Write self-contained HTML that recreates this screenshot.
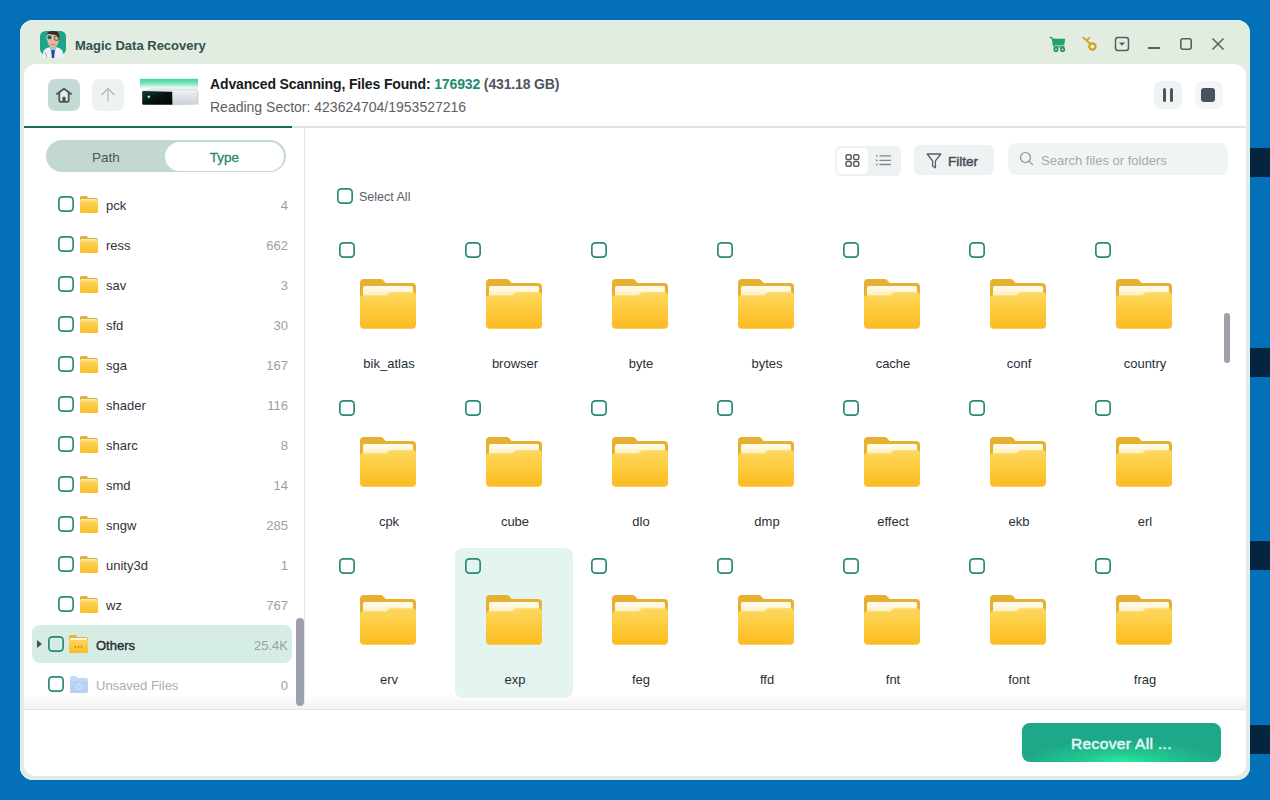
<!DOCTYPE html>
<html><head><meta charset="utf-8">
<style>
*{box-sizing:border-box;margin:0;padding:0}
html,body{width:1270px;height:800px;overflow:hidden}
body{background:#0470b8;font-family:"Liberation Sans",sans-serif;position:relative}
.a{position:absolute}
.stripe{position:absolute;left:1250px;width:20px;background:#04253f}
#win{position:absolute;left:20px;top:20px;width:1230px;height:760px;border-radius:13px;background:#e2ece0;box-shadow:inset 0 0 0 1px #d9f3f6}
#inner{position:absolute;left:24px;top:64px;width:1222px;height:712px;border-radius:12px;background:#fff}
.title{left:75px;top:37.5px;font-size:13px;font-weight:bold;color:#2f514c;white-space:nowrap}
.cb{position:absolute;width:16px;height:16px;box-shadow:inset 0 0 0 1.7px #2b8a76;border-radius:4.5px;background:#fff}
.side-row{position:absolute;left:0;width:292px;height:40px}
.side-row .cb{left:58px;top:11px}
.side-row .nm{position:absolute;left:106px;top:13px;font-size:13px;color:#2e3339;white-space:nowrap}
.side-row .ct{position:absolute;right:4px;top:13px;font-size:13px;color:#9aa0a6;text-align:right}
.side-row svg{position:absolute;left:80px;top:11px}
.cell{position:absolute;width:118px;height:150px}
.cell .cb{left:14px;top:6px}
.cell svg{position:absolute;left:29px;top:42px}
.cell .lb{position:absolute;left:0;width:118px;top:106px;text-align:center;font-size:13px;color:#2a2f36;white-space:nowrap}
</style></head><body>
<div class="stripe" style="top:148px;height:29px"></div>
<div class="stripe" style="top:348px;height:29px"></div>
<div class="stripe" style="top:541px;height:29px"></div>
<div class="stripe" style="top:725px;height:29px"></div>

<div id="win"></div>
<div id="inner"></div>

<!-- title bar -->
<svg class="a" style="left:40px;top:31px" width="26" height="27" viewBox="0 0 26 27">
<rect x="0" y="0" width="26" height="23.5" rx="5.5" fill="#1ca58a"/>
<path d="M2.5 27 L3.5 19.5 Q6 16.5 10 16 L13 18 L16 16 Q20 16.5 22.5 19.5 L23.5 27 Z" fill="#eef1f3"/>
<path d="M9.5 16.3 L13 27 L16.5 16.3 Z" fill="#a9bfdc"/>
<path d="M11.3 19 H14.7 L14.2 27 H11.8Z" fill="#1d4b9e"/>
<path d="M5 21 Q7 24 6.5 26.5" fill="none" stroke="#8a8f90" stroke-width="0.8"/>
<ellipse cx="13" cy="9.5" rx="5.6" ry="7.2" fill="#e8b597"/>
<path d="M6.8 8 Q6 1.5 10 0.3 Q13 -0.5 16.5 0.5 Q20 2 19.3 8 Q18.5 4 13 3.6 Q8 4 6.8 8Z" fill="#3a2a1f"/>
<circle cx="9.5" cy="6.3" r="2.7" fill="#2a5f4c" stroke="#c9ccc4" stroke-width="1.1"/>
<circle cx="16.4" cy="7.3" r="2.2" fill="none" stroke="#5e4436" stroke-width="0.9"/>
<path d="M10.5 13.3 Q13 14.3 15.5 13.3" fill="none" stroke="#b9775c" stroke-width="0.7"/>
</svg>
<div class="a title">Magic Data Recovery</div>

<!-- title icons -->
<svg class="a" style="left:1049px;top:36px" width="18" height="16" viewBox="0 0 18 16">
<defs><linearGradient id="cg" x1="0" y1="0" x2="1" y2="1"><stop offset="0" stop-color="#1e9a58"/><stop offset="1" stop-color="#24ad72"/></linearGradient></defs>
<path d="M1.2 1.4 L3.4 2.2 L4.6 9.6" fill="none" stroke="#23a067" stroke-width="1.5" stroke-linecap="round" stroke-linejoin="round"/>
<path d="M3.8 2.8 H16.2 L15.2 9.6 H4.8Z" fill="url(#cg)"/>
<path d="M4.6 10.9 H15.4" stroke="#1f9a5e" stroke-width="1.2"/>
<circle cx="7" cy="13.4" r="1.7" fill="none" stroke="#1f935a" stroke-width="1.7"/>
<circle cx="13.6" cy="13.4" r="1.7" fill="none" stroke="#1f935a" stroke-width="1.7"/>
</svg>
<svg class="a" style="left:1082px;top:36px" width="16" height="16" viewBox="0 0 16 16">
<path d="M1.3 1.6 L8.3 7.8" stroke="#c9a21e" stroke-width="1.8" stroke-linecap="round"/>
<path d="M4.6 4.4 L7.6 1.7" stroke="#c9a21e" stroke-width="1.7" stroke-linecap="round"/>
<circle cx="10.4" cy="10.5" r="3.1" fill="#f6ecd0" stroke="#c9a21e" stroke-width="2.2"/>
</svg>
<svg class="a" style="left:1114px;top:36px" width="16" height="16" viewBox="0 0 16 16">
<rect x="1.5" y="1.5" width="13" height="13" rx="2.5" fill="none" stroke="#56605e" stroke-width="1.5"/>
<path d="M5 6.6 H11 L8 9.8Z" fill="#56625e"/>
</svg>
<div class="a" style="left:1148px;top:47px;width:12px;height:1.6px;background:#56605e"></div>
<div class="a" style="left:1180px;top:38px;width:12px;height:12px;box-shadow:inset 0 0 0 1.6px #56625e;border-radius:3px"></div>
<svg class="a" style="left:1211px;top:37px" width="14" height="14" viewBox="0 0 14 14">
<path d="M1.5 1.5 L12.5 12.5 M12.5 1.5 L1.5 12.5" stroke="#56625e" stroke-width="1.5"/>
</svg>

<!-- header -->
<div class="a" style="left:48px;top:79px;width:32px;height:32px;border-radius:7px;background:#c4dbd5"></div>
<svg class="a" style="left:55px;top:87px" width="18" height="17" viewBox="0 0 18 17">
<path d="M4.3 7 V13.3 Q4.3 14.9 5.9 14.9 H12.1 Q13.7 14.9 13.7 13.3 V7 L9 3Z" fill="#e7eef0"/>
<path d="M1.9 6.9 L9 1.7 L16.1 6.9" fill="none" stroke="#4a5558" stroke-width="1.8" stroke-linejoin="round" stroke-linecap="round"/>
<path d="M4.3 6 V13.3 Q4.3 14.9 5.9 14.9 H12.1 Q13.7 14.9 13.7 13.3 V6" fill="none" stroke="#4a5558" stroke-width="1.8"/>
<path d="M7.3 14.9 V11.3 Q7.3 9.6 9 9.6 Q10.7 9.6 10.7 11.3 V14.9Z" fill="#4a5558"/>
</svg>
<div class="a" style="left:92px;top:79px;width:32px;height:32px;border-radius:7px;background:#eef3f2"></div>
<svg class="a" style="left:100px;top:87px" width="16" height="16" viewBox="0 0 16 16">
<path d="M8 14.5 V2 M1.5 8 L8 1.5 L14.5 8" fill="none" stroke="#afb4b6" stroke-width="1.15"/>
</svg>

<!-- drive -->
<svg class="a" style="left:140px;top:78px" width="60" height="30" viewBox="0 0 60 30">
<defs>
<linearGradient id="gg" x1="0" y1="0" x2="0" y2="1"><stop offset="0" stop-color="#3cd59a"/><stop offset="0.45" stop-color="#7fe3bb"/><stop offset="1" stop-color="#ffffff"/></linearGradient>
<linearGradient id="dk" x1="0" y1="0" x2="1" y2="1"><stop offset="0" stop-color="#0f3d32"/><stop offset="0.5" stop-color="#061310"/><stop offset="1" stop-color="#030303"/></linearGradient>
<linearGradient id="sv" x1="0" y1="0" x2="0" y2="1"><stop offset="0" stop-color="#eceef2"/><stop offset="1" stop-color="#cbd0d8"/></linearGradient>
</defs>
<rect x="0" y="0.8" width="58" height="10" fill="url(#gg)"/>
<path d="M12 10.3 L57 10.6 L58 13 L3 13Z" fill="#e2e5e9"/>
<path d="M3.5 13 L32.5 13.7 V26.8 L3.5 26.8 Q2.2 26.8 2.2 25.5 V14.3 Q2.2 13 3.5 13Z" fill="url(#dk)"/>
<path d="M32.3 13.6 L57.8 13.2 V26.6 L33 27.2 Z" fill="url(#sv)"/>
<path d="M57.8 13.2 V26.6" stroke="#b9bec8" stroke-width="0.8"/>
<path d="M8.8 17.2 L10.4 18.8 L8.8 20.4 L7.2 18.8Z" fill="#8ff5c8"/>
</svg>

<div class="a" style="left:210px;top:76px;font-size:14px;font-weight:bold;color:#161a1d;white-space:nowrap;letter-spacing:-0.14px">Advanced Scanning, Files Found: <span style="color:#1f8a70">176932</span> <span style="color:#50555c">(431.18 GB)</span></div>
<div class="a" style="left:210px;top:99px;font-size:14px;color:#5b6067;white-space:nowrap">Reading Sector: 423624704/1953527216</div>

<div class="a" style="left:1154px;top:81px;width:28px;height:28px;border-radius:7px;background:#f0f3f4"></div>
<div class="a" style="left:1163px;top:88px;width:3px;height:14px;border-radius:1.5px;background:#4e5260"></div>
<div class="a" style="left:1170px;top:88px;width:3px;height:14px;border-radius:1.5px;background:#4e5260"></div>
<div class="a" style="left:1195px;top:81px;width:28px;height:28px;border-radius:7px;background:#f4f6f6"></div>
<div class="a" style="left:1201px;top:88px;width:14px;height:14px;border-radius:3px;background:#4b5161"></div>

<div class="a" style="left:24px;top:126px;width:1222px;height:2px;background:#e2e3e5"></div>
<div class="a" style="left:24px;top:126px;width:268px;height:2px;background:#1b6e5a"></div>
<div class="a" style="left:304px;top:128px;width:1px;height:582px;background:#e8e8e8"></div>

<!-- sidebar -->
<div class="a" style="left:46px;top:140px;width:240px;height:32px;border-radius:16px;background:#c3d8d1"></div>
<div class="a" style="left:165px;top:141.5px;width:119px;height:29px;border-radius:15px;background:#fff"></div>
<div class="a" style="left:46px;top:150px;width:120px;text-align:center;font-size:13.5px;color:#4b5559">Path</div>
<div class="a" style="left:165px;top:150px;width:119px;text-align:center;font-size:13.5px;color:#2b8a73;-webkit-text-stroke:0.35px #2b8a73">Type</div>

<svg width="0" height="0" style="position:absolute"><defs>
<linearGradient id="fr" x1="0" y1="0" x2="0" y2="1"><stop offset="0" stop-color="#fdd862"/><stop offset="0.5" stop-color="#fdca3c"/><stop offset="1" stop-color="#fbbb22"/></linearGradient>
<linearGradient id="pp" x1="0" y1="0" x2="0" y2="1"><stop offset="0" stop-color="#fffdf2"/><stop offset="1" stop-color="#fde9a8"/></linearGradient>
<linearGradient id="sfr" x1="0" y1="0" x2="0" y2="1"><stop offset="0" stop-color="#fdd660"/><stop offset="1" stop-color="#fbbd26"/></linearGradient>
</defs></svg><div class="side-row" style="top:185px"><div class="cb"></div><svg width="18" height="17" viewBox="0 0 18 17"><path d="M0 1.5 Q0 0 1.5 0 H6 Q6.8 0 7.3 0.7 L8.2 2 H16.5 Q18 2 18 3.5 V10 H0Z" fill="#dcaf38"/><path d="M0.8 3 H17.2 V6 H0.8Z" fill="#fde9a6"/><path d="M0 4.2 H18 V15.8 Q18 17 16.8 17 H1.2 Q0 17 0 15.8Z" fill="url(#sfr)"/><path d="M0.5 4.7 H17.5" stroke="#fee58e" stroke-width="0.8"/></svg><div class="nm">pck</div><div class="ct">4</div></div>
<div class="side-row" style="top:225px"><div class="cb"></div><svg width="18" height="17" viewBox="0 0 18 17"><path d="M0 1.5 Q0 0 1.5 0 H6 Q6.8 0 7.3 0.7 L8.2 2 H16.5 Q18 2 18 3.5 V10 H0Z" fill="#dcaf38"/><path d="M0.8 3 H17.2 V6 H0.8Z" fill="#fde9a6"/><path d="M0 4.2 H18 V15.8 Q18 17 16.8 17 H1.2 Q0 17 0 15.8Z" fill="url(#sfr)"/><path d="M0.5 4.7 H17.5" stroke="#fee58e" stroke-width="0.8"/></svg><div class="nm">ress</div><div class="ct">662</div></div>
<div class="side-row" style="top:265px"><div class="cb"></div><svg width="18" height="17" viewBox="0 0 18 17"><path d="M0 1.5 Q0 0 1.5 0 H6 Q6.8 0 7.3 0.7 L8.2 2 H16.5 Q18 2 18 3.5 V10 H0Z" fill="#dcaf38"/><path d="M0.8 3 H17.2 V6 H0.8Z" fill="#fde9a6"/><path d="M0 4.2 H18 V15.8 Q18 17 16.8 17 H1.2 Q0 17 0 15.8Z" fill="url(#sfr)"/><path d="M0.5 4.7 H17.5" stroke="#fee58e" stroke-width="0.8"/></svg><div class="nm">sav</div><div class="ct">3</div></div>
<div class="side-row" style="top:305px"><div class="cb"></div><svg width="18" height="17" viewBox="0 0 18 17"><path d="M0 1.5 Q0 0 1.5 0 H6 Q6.8 0 7.3 0.7 L8.2 2 H16.5 Q18 2 18 3.5 V10 H0Z" fill="#dcaf38"/><path d="M0.8 3 H17.2 V6 H0.8Z" fill="#fde9a6"/><path d="M0 4.2 H18 V15.8 Q18 17 16.8 17 H1.2 Q0 17 0 15.8Z" fill="url(#sfr)"/><path d="M0.5 4.7 H17.5" stroke="#fee58e" stroke-width="0.8"/></svg><div class="nm">sfd</div><div class="ct">30</div></div>
<div class="side-row" style="top:345px"><div class="cb"></div><svg width="18" height="17" viewBox="0 0 18 17"><path d="M0 1.5 Q0 0 1.5 0 H6 Q6.8 0 7.3 0.7 L8.2 2 H16.5 Q18 2 18 3.5 V10 H0Z" fill="#dcaf38"/><path d="M0.8 3 H17.2 V6 H0.8Z" fill="#fde9a6"/><path d="M0 4.2 H18 V15.8 Q18 17 16.8 17 H1.2 Q0 17 0 15.8Z" fill="url(#sfr)"/><path d="M0.5 4.7 H17.5" stroke="#fee58e" stroke-width="0.8"/></svg><div class="nm">sga</div><div class="ct">167</div></div>
<div class="side-row" style="top:385px"><div class="cb"></div><svg width="18" height="17" viewBox="0 0 18 17"><path d="M0 1.5 Q0 0 1.5 0 H6 Q6.8 0 7.3 0.7 L8.2 2 H16.5 Q18 2 18 3.5 V10 H0Z" fill="#dcaf38"/><path d="M0.8 3 H17.2 V6 H0.8Z" fill="#fde9a6"/><path d="M0 4.2 H18 V15.8 Q18 17 16.8 17 H1.2 Q0 17 0 15.8Z" fill="url(#sfr)"/><path d="M0.5 4.7 H17.5" stroke="#fee58e" stroke-width="0.8"/></svg><div class="nm">shader</div><div class="ct">116</div></div>
<div class="side-row" style="top:425px"><div class="cb"></div><svg width="18" height="17" viewBox="0 0 18 17"><path d="M0 1.5 Q0 0 1.5 0 H6 Q6.8 0 7.3 0.7 L8.2 2 H16.5 Q18 2 18 3.5 V10 H0Z" fill="#dcaf38"/><path d="M0.8 3 H17.2 V6 H0.8Z" fill="#fde9a6"/><path d="M0 4.2 H18 V15.8 Q18 17 16.8 17 H1.2 Q0 17 0 15.8Z" fill="url(#sfr)"/><path d="M0.5 4.7 H17.5" stroke="#fee58e" stroke-width="0.8"/></svg><div class="nm">sharc</div><div class="ct">8</div></div>
<div class="side-row" style="top:465px"><div class="cb"></div><svg width="18" height="17" viewBox="0 0 18 17"><path d="M0 1.5 Q0 0 1.5 0 H6 Q6.8 0 7.3 0.7 L8.2 2 H16.5 Q18 2 18 3.5 V10 H0Z" fill="#dcaf38"/><path d="M0.8 3 H17.2 V6 H0.8Z" fill="#fde9a6"/><path d="M0 4.2 H18 V15.8 Q18 17 16.8 17 H1.2 Q0 17 0 15.8Z" fill="url(#sfr)"/><path d="M0.5 4.7 H17.5" stroke="#fee58e" stroke-width="0.8"/></svg><div class="nm">smd</div><div class="ct">14</div></div>
<div class="side-row" style="top:505px"><div class="cb"></div><svg width="18" height="17" viewBox="0 0 18 17"><path d="M0 1.5 Q0 0 1.5 0 H6 Q6.8 0 7.3 0.7 L8.2 2 H16.5 Q18 2 18 3.5 V10 H0Z" fill="#dcaf38"/><path d="M0.8 3 H17.2 V6 H0.8Z" fill="#fde9a6"/><path d="M0 4.2 H18 V15.8 Q18 17 16.8 17 H1.2 Q0 17 0 15.8Z" fill="url(#sfr)"/><path d="M0.5 4.7 H17.5" stroke="#fee58e" stroke-width="0.8"/></svg><div class="nm">sngw</div><div class="ct">285</div></div>
<div class="side-row" style="top:545px"><div class="cb"></div><svg width="18" height="17" viewBox="0 0 18 17"><path d="M0 1.5 Q0 0 1.5 0 H6 Q6.8 0 7.3 0.7 L8.2 2 H16.5 Q18 2 18 3.5 V10 H0Z" fill="#dcaf38"/><path d="M0.8 3 H17.2 V6 H0.8Z" fill="#fde9a6"/><path d="M0 4.2 H18 V15.8 Q18 17 16.8 17 H1.2 Q0 17 0 15.8Z" fill="url(#sfr)"/><path d="M0.5 4.7 H17.5" stroke="#fee58e" stroke-width="0.8"/></svg><div class="nm">unity3d</div><div class="ct">1</div></div>
<div class="side-row" style="top:585px"><div class="cb"></div><svg width="18" height="17" viewBox="0 0 18 17"><path d="M0 1.5 Q0 0 1.5 0 H6 Q6.8 0 7.3 0.7 L8.2 2 H16.5 Q18 2 18 3.5 V10 H0Z" fill="#dcaf38"/><path d="M0.8 3 H17.2 V6 H0.8Z" fill="#fde9a6"/><path d="M0 4.2 H18 V15.8 Q18 17 16.8 17 H1.2 Q0 17 0 15.8Z" fill="url(#sfr)"/><path d="M0.5 4.7 H17.5" stroke="#fee58e" stroke-width="0.8"/></svg><div class="nm">wz</div><div class="ct">767</div></div>
<div class="a" style="left:32px;top:625px;width:260px;height:38px;border-radius:8px;background:#d6ede6"></div>
<svg class="a" style="left:37px;top:640px" width="5" height="8" viewBox="0 0 5 8"><path d="M0 0 L5 4 L0 8Z" fill="#4a5058"/></svg>
<div class="cb" style="left:48px;top:636px;background:transparent"></div>
<svg class="a" style="left:69px;top:635px" width="19" height="18" viewBox="0 0 19 18"><path d="M0 2 Q0 0 2 0 H6.5 L8.5 2 H17 Q19 2 19 4 V10 H0Z" fill="#e9b335"/><rect x="1" y="3" width="17" height="4" fill="#fff3cf"/><path d="M0 5 H19 V17 Q19 18 18 18 H1 Q0 18 0 17Z" fill="url(#sfr)"/><g fill="#c8820e"><rect x="5.6" y="11" width="1.6" height="1.6"/><rect x="8.7" y="11" width="1.6" height="1.6"/><rect x="11.8" y="11" width="1.6" height="1.6"/></g></svg>
<div class="a" style="left:96px;top:638px;font-size:13px;color:#262c33;-webkit-text-stroke:0.4px #262c33">Others</div>
<div class="a" style="left:200px;width:88px;top:638px;font-size:13px;color:#9aa0a6;text-align:right">25.4K</div>
<div class="cb" style="left:48px;top:676px"></div>
<svg class="a" style="left:70px;top:676px" width="18" height="17" viewBox="0 0 18 17"><path d="M0 2 Q0 0 2 0 H6 L8 2 H16 Q18 2 18 4 V16 Q18 17 17 17 H1 Q0 17 0 16Z" fill="#c5d9f5"/><path d="M0 5 H18 V16 Q18 17 17 17 H1 Q0 17 0 16Z" fill="#b9d1f4"/><circle cx="9" cy="11" r="2.5" fill="none" stroke="#dbe8fa" stroke-width="1"/></svg>
<div class="a" style="left:96px;top:678px;font-size:13px;color:#a9aeb4">Unsaved Files</div>
<div class="a" style="left:200px;width:88px;top:678px;font-size:13px;color:#9aa0a6;text-align:right">0</div>


<div class="a" style="left:296px;top:618px;width:8px;height:88px;border-radius:4px;background:#9ca0ae;z-index:5"></div>

<!-- main toolbar -->
<div class="a" style="left:835px;top:146px;width:66px;height:30px;border-radius:6px;background:#eef2f2"></div>
<div class="a" style="left:837px;top:148px;width:31px;height:26px;border-radius:5px;background:#fff"></div>
<svg class="a" style="left:845px;top:154px" width="15" height="13" viewBox="0 0 15 13">
<g fill="none" stroke="#585d66" stroke-width="1.5">
<rect x="1" y="0.8" width="5.2" height="4.8" rx="1.5"/><rect x="8.6" y="0.8" width="5.2" height="4.8" rx="1.5"/>
<rect x="1" y="7.4" width="5.2" height="4.8" rx="1.5"/><rect x="8.6" y="7.4" width="5.2" height="4.8" rx="1.5"/>
</g></svg>
<svg class="a" style="left:875px;top:154px" width="17" height="12" viewBox="0 0 17 12">
<g fill="#80868f"><rect x="1" y="1.1" width="1.5" height="1.5"/><rect x="1" y="5.6" width="1.5" height="1.5"/><rect x="1" y="9.8" width="1.5" height="1.5"/>
<rect x="4.3" y="1.2" width="11.8" height="1.4" rx="0.7"/><rect x="4.3" y="5.7" width="11.8" height="1.4" rx="0.7"/><rect x="4.3" y="9.8" width="11.8" height="1.4" rx="0.7"/></g></svg>

<div class="a" style="left:914px;top:145px;width:80px;height:30px;border-radius:6px;background:#eef2f2"></div>
<svg class="a" style="left:926px;top:152.5px" width="16" height="16" viewBox="0 0 16 16">
<path d="M1.2 1 H14.8 L9.4 7.8 V14.8 L6.6 13.3 V7.8 Z" fill="none" stroke="#5a5f68" stroke-width="1.3" stroke-linejoin="round"/>
</svg>
<div class="a" style="left:948px;top:154px;font-size:13.5px;color:#454b54;-webkit-text-stroke:0.45px #454b54">Filter</div>

<div class="a" style="left:1008px;top:143px;width:220px;height:32px;border-radius:8px;background:#f0f4f3"></div>
<svg class="a" style="left:1019px;top:151px" width="16" height="16" viewBox="0 0 16 16">
<circle cx="6.5" cy="6.5" r="5" fill="none" stroke="#8e959b" stroke-width="1.2"/>
<path d="M10.3 10.3 L13.6 13.6" stroke="#8e959b" stroke-width="1.2" stroke-linecap="round"/>
</svg>
<div class="a" style="left:1041px;top:153px;font-size:13px;color:#a4aab0;white-space:nowrap">Search files or folders</div>

<div class="cb" style="left:337px;top:188px"></div>
<div class="a" style="left:359px;top:190px;font-size:12.5px;color:#5b6068">Select All</div>

<div class="cell" style="left:329px;top:232px;"></div><div class="cb" style="left:339px;top:242px;"></div><svg class="a" style="left:360px;top:279px" width="56" height="50" viewBox="0 0 56 50"><path d="M0 4 Q0 0 4 0 H20.5 Q22.5 0 24 2 L25.5 4 H52 Q56 4 56 8 V30 H0Z" fill="#e8b030"/><rect x="3" y="7" width="50" height="14" rx="2" fill="url(#pp)"/><path d="M0 20 Q0 16 4 16 H25 Q27 16 28 14.5 Q29 13 31 13 H52 Q56 13 56 17 V45.5 Q56 49.7 52 49.7 H4 Q0 49.7 0 45.5Z" fill="url(#fr)"/><path d="M4 16.6 H25 Q27 16.6 28 15.1 Q29 13.6 31 13.6 H52" fill="none" stroke="#fee48a" stroke-width="0.9" opacity="0.8"/></svg><div class="a lb" style="left:325px;top:355.5px;width:128px;text-align:center;font-size:13px;color:#2a2f36;white-space:nowrap">bik_atlas</div>
<div class="cell" style="left:455px;top:232px;"></div><div class="cb" style="left:465px;top:242px;"></div><svg class="a" style="left:486px;top:279px" width="56" height="50" viewBox="0 0 56 50"><path d="M0 4 Q0 0 4 0 H20.5 Q22.5 0 24 2 L25.5 4 H52 Q56 4 56 8 V30 H0Z" fill="#e8b030"/><rect x="3" y="7" width="50" height="14" rx="2" fill="url(#pp)"/><path d="M0 20 Q0 16 4 16 H25 Q27 16 28 14.5 Q29 13 31 13 H52 Q56 13 56 17 V45.5 Q56 49.7 52 49.7 H4 Q0 49.7 0 45.5Z" fill="url(#fr)"/><path d="M4 16.6 H25 Q27 16.6 28 15.1 Q29 13.6 31 13.6 H52" fill="none" stroke="#fee48a" stroke-width="0.9" opacity="0.8"/></svg><div class="a lb" style="left:451px;top:355.5px;width:128px;text-align:center;font-size:13px;color:#2a2f36;white-space:nowrap">browser</div>
<div class="cell" style="left:581px;top:232px;"></div><div class="cb" style="left:591px;top:242px;"></div><svg class="a" style="left:612px;top:279px" width="56" height="50" viewBox="0 0 56 50"><path d="M0 4 Q0 0 4 0 H20.5 Q22.5 0 24 2 L25.5 4 H52 Q56 4 56 8 V30 H0Z" fill="#e8b030"/><rect x="3" y="7" width="50" height="14" rx="2" fill="url(#pp)"/><path d="M0 20 Q0 16 4 16 H25 Q27 16 28 14.5 Q29 13 31 13 H52 Q56 13 56 17 V45.5 Q56 49.7 52 49.7 H4 Q0 49.7 0 45.5Z" fill="url(#fr)"/><path d="M4 16.6 H25 Q27 16.6 28 15.1 Q29 13.6 31 13.6 H52" fill="none" stroke="#fee48a" stroke-width="0.9" opacity="0.8"/></svg><div class="a lb" style="left:577px;top:355.5px;width:128px;text-align:center;font-size:13px;color:#2a2f36;white-space:nowrap">byte</div>
<div class="cell" style="left:707px;top:232px;"></div><div class="cb" style="left:717px;top:242px;"></div><svg class="a" style="left:738px;top:279px" width="56" height="50" viewBox="0 0 56 50"><path d="M0 4 Q0 0 4 0 H20.5 Q22.5 0 24 2 L25.5 4 H52 Q56 4 56 8 V30 H0Z" fill="#e8b030"/><rect x="3" y="7" width="50" height="14" rx="2" fill="url(#pp)"/><path d="M0 20 Q0 16 4 16 H25 Q27 16 28 14.5 Q29 13 31 13 H52 Q56 13 56 17 V45.5 Q56 49.7 52 49.7 H4 Q0 49.7 0 45.5Z" fill="url(#fr)"/><path d="M4 16.6 H25 Q27 16.6 28 15.1 Q29 13.6 31 13.6 H52" fill="none" stroke="#fee48a" stroke-width="0.9" opacity="0.8"/></svg><div class="a lb" style="left:703px;top:355.5px;width:128px;text-align:center;font-size:13px;color:#2a2f36;white-space:nowrap">bytes</div>
<div class="cell" style="left:833px;top:232px;"></div><div class="cb" style="left:843px;top:242px;"></div><svg class="a" style="left:864px;top:279px" width="56" height="50" viewBox="0 0 56 50"><path d="M0 4 Q0 0 4 0 H20.5 Q22.5 0 24 2 L25.5 4 H52 Q56 4 56 8 V30 H0Z" fill="#e8b030"/><rect x="3" y="7" width="50" height="14" rx="2" fill="url(#pp)"/><path d="M0 20 Q0 16 4 16 H25 Q27 16 28 14.5 Q29 13 31 13 H52 Q56 13 56 17 V45.5 Q56 49.7 52 49.7 H4 Q0 49.7 0 45.5Z" fill="url(#fr)"/><path d="M4 16.6 H25 Q27 16.6 28 15.1 Q29 13.6 31 13.6 H52" fill="none" stroke="#fee48a" stroke-width="0.9" opacity="0.8"/></svg><div class="a lb" style="left:829px;top:355.5px;width:128px;text-align:center;font-size:13px;color:#2a2f36;white-space:nowrap">cache</div>
<div class="cell" style="left:959px;top:232px;"></div><div class="cb" style="left:969px;top:242px;"></div><svg class="a" style="left:990px;top:279px" width="56" height="50" viewBox="0 0 56 50"><path d="M0 4 Q0 0 4 0 H20.5 Q22.5 0 24 2 L25.5 4 H52 Q56 4 56 8 V30 H0Z" fill="#e8b030"/><rect x="3" y="7" width="50" height="14" rx="2" fill="url(#pp)"/><path d="M0 20 Q0 16 4 16 H25 Q27 16 28 14.5 Q29 13 31 13 H52 Q56 13 56 17 V45.5 Q56 49.7 52 49.7 H4 Q0 49.7 0 45.5Z" fill="url(#fr)"/><path d="M4 16.6 H25 Q27 16.6 28 15.1 Q29 13.6 31 13.6 H52" fill="none" stroke="#fee48a" stroke-width="0.9" opacity="0.8"/></svg><div class="a lb" style="left:955px;top:355.5px;width:128px;text-align:center;font-size:13px;color:#2a2f36;white-space:nowrap">conf</div>
<div class="cell" style="left:1085px;top:232px;"></div><div class="cb" style="left:1095px;top:242px;"></div><svg class="a" style="left:1116px;top:279px" width="56" height="50" viewBox="0 0 56 50"><path d="M0 4 Q0 0 4 0 H20.5 Q22.5 0 24 2 L25.5 4 H52 Q56 4 56 8 V30 H0Z" fill="#e8b030"/><rect x="3" y="7" width="50" height="14" rx="2" fill="url(#pp)"/><path d="M0 20 Q0 16 4 16 H25 Q27 16 28 14.5 Q29 13 31 13 H52 Q56 13 56 17 V45.5 Q56 49.7 52 49.7 H4 Q0 49.7 0 45.5Z" fill="url(#fr)"/><path d="M4 16.6 H25 Q27 16.6 28 15.1 Q29 13.6 31 13.6 H52" fill="none" stroke="#fee48a" stroke-width="0.9" opacity="0.8"/></svg><div class="a lb" style="left:1081px;top:355.5px;width:128px;text-align:center;font-size:13px;color:#2a2f36;white-space:nowrap">country</div>
<div class="cell" style="left:329px;top:390px;"></div><div class="cb" style="left:339px;top:400px;"></div><svg class="a" style="left:360px;top:437px" width="56" height="50" viewBox="0 0 56 50"><path d="M0 4 Q0 0 4 0 H20.5 Q22.5 0 24 2 L25.5 4 H52 Q56 4 56 8 V30 H0Z" fill="#e8b030"/><rect x="3" y="7" width="50" height="14" rx="2" fill="url(#pp)"/><path d="M0 20 Q0 16 4 16 H25 Q27 16 28 14.5 Q29 13 31 13 H52 Q56 13 56 17 V45.5 Q56 49.7 52 49.7 H4 Q0 49.7 0 45.5Z" fill="url(#fr)"/><path d="M4 16.6 H25 Q27 16.6 28 15.1 Q29 13.6 31 13.6 H52" fill="none" stroke="#fee48a" stroke-width="0.9" opacity="0.8"/></svg><div class="a lb" style="left:325px;top:513.5px;width:128px;text-align:center;font-size:13px;color:#2a2f36;white-space:nowrap">cpk</div>
<div class="cell" style="left:455px;top:390px;"></div><div class="cb" style="left:465px;top:400px;"></div><svg class="a" style="left:486px;top:437px" width="56" height="50" viewBox="0 0 56 50"><path d="M0 4 Q0 0 4 0 H20.5 Q22.5 0 24 2 L25.5 4 H52 Q56 4 56 8 V30 H0Z" fill="#e8b030"/><rect x="3" y="7" width="50" height="14" rx="2" fill="url(#pp)"/><path d="M0 20 Q0 16 4 16 H25 Q27 16 28 14.5 Q29 13 31 13 H52 Q56 13 56 17 V45.5 Q56 49.7 52 49.7 H4 Q0 49.7 0 45.5Z" fill="url(#fr)"/><path d="M4 16.6 H25 Q27 16.6 28 15.1 Q29 13.6 31 13.6 H52" fill="none" stroke="#fee48a" stroke-width="0.9" opacity="0.8"/></svg><div class="a lb" style="left:451px;top:513.5px;width:128px;text-align:center;font-size:13px;color:#2a2f36;white-space:nowrap">cube</div>
<div class="cell" style="left:581px;top:390px;"></div><div class="cb" style="left:591px;top:400px;"></div><svg class="a" style="left:612px;top:437px" width="56" height="50" viewBox="0 0 56 50"><path d="M0 4 Q0 0 4 0 H20.5 Q22.5 0 24 2 L25.5 4 H52 Q56 4 56 8 V30 H0Z" fill="#e8b030"/><rect x="3" y="7" width="50" height="14" rx="2" fill="url(#pp)"/><path d="M0 20 Q0 16 4 16 H25 Q27 16 28 14.5 Q29 13 31 13 H52 Q56 13 56 17 V45.5 Q56 49.7 52 49.7 H4 Q0 49.7 0 45.5Z" fill="url(#fr)"/><path d="M4 16.6 H25 Q27 16.6 28 15.1 Q29 13.6 31 13.6 H52" fill="none" stroke="#fee48a" stroke-width="0.9" opacity="0.8"/></svg><div class="a lb" style="left:577px;top:513.5px;width:128px;text-align:center;font-size:13px;color:#2a2f36;white-space:nowrap">dlo</div>
<div class="cell" style="left:707px;top:390px;"></div><div class="cb" style="left:717px;top:400px;"></div><svg class="a" style="left:738px;top:437px" width="56" height="50" viewBox="0 0 56 50"><path d="M0 4 Q0 0 4 0 H20.5 Q22.5 0 24 2 L25.5 4 H52 Q56 4 56 8 V30 H0Z" fill="#e8b030"/><rect x="3" y="7" width="50" height="14" rx="2" fill="url(#pp)"/><path d="M0 20 Q0 16 4 16 H25 Q27 16 28 14.5 Q29 13 31 13 H52 Q56 13 56 17 V45.5 Q56 49.7 52 49.7 H4 Q0 49.7 0 45.5Z" fill="url(#fr)"/><path d="M4 16.6 H25 Q27 16.6 28 15.1 Q29 13.6 31 13.6 H52" fill="none" stroke="#fee48a" stroke-width="0.9" opacity="0.8"/></svg><div class="a lb" style="left:703px;top:513.5px;width:128px;text-align:center;font-size:13px;color:#2a2f36;white-space:nowrap">dmp</div>
<div class="cell" style="left:833px;top:390px;"></div><div class="cb" style="left:843px;top:400px;"></div><svg class="a" style="left:864px;top:437px" width="56" height="50" viewBox="0 0 56 50"><path d="M0 4 Q0 0 4 0 H20.5 Q22.5 0 24 2 L25.5 4 H52 Q56 4 56 8 V30 H0Z" fill="#e8b030"/><rect x="3" y="7" width="50" height="14" rx="2" fill="url(#pp)"/><path d="M0 20 Q0 16 4 16 H25 Q27 16 28 14.5 Q29 13 31 13 H52 Q56 13 56 17 V45.5 Q56 49.7 52 49.7 H4 Q0 49.7 0 45.5Z" fill="url(#fr)"/><path d="M4 16.6 H25 Q27 16.6 28 15.1 Q29 13.6 31 13.6 H52" fill="none" stroke="#fee48a" stroke-width="0.9" opacity="0.8"/></svg><div class="a lb" style="left:829px;top:513.5px;width:128px;text-align:center;font-size:13px;color:#2a2f36;white-space:nowrap">effect</div>
<div class="cell" style="left:959px;top:390px;"></div><div class="cb" style="left:969px;top:400px;"></div><svg class="a" style="left:990px;top:437px" width="56" height="50" viewBox="0 0 56 50"><path d="M0 4 Q0 0 4 0 H20.5 Q22.5 0 24 2 L25.5 4 H52 Q56 4 56 8 V30 H0Z" fill="#e8b030"/><rect x="3" y="7" width="50" height="14" rx="2" fill="url(#pp)"/><path d="M0 20 Q0 16 4 16 H25 Q27 16 28 14.5 Q29 13 31 13 H52 Q56 13 56 17 V45.5 Q56 49.7 52 49.7 H4 Q0 49.7 0 45.5Z" fill="url(#fr)"/><path d="M4 16.6 H25 Q27 16.6 28 15.1 Q29 13.6 31 13.6 H52" fill="none" stroke="#fee48a" stroke-width="0.9" opacity="0.8"/></svg><div class="a lb" style="left:955px;top:513.5px;width:128px;text-align:center;font-size:13px;color:#2a2f36;white-space:nowrap">ekb</div>
<div class="cell" style="left:1085px;top:390px;"></div><div class="cb" style="left:1095px;top:400px;"></div><svg class="a" style="left:1116px;top:437px" width="56" height="50" viewBox="0 0 56 50"><path d="M0 4 Q0 0 4 0 H20.5 Q22.5 0 24 2 L25.5 4 H52 Q56 4 56 8 V30 H0Z" fill="#e8b030"/><rect x="3" y="7" width="50" height="14" rx="2" fill="url(#pp)"/><path d="M0 20 Q0 16 4 16 H25 Q27 16 28 14.5 Q29 13 31 13 H52 Q56 13 56 17 V45.5 Q56 49.7 52 49.7 H4 Q0 49.7 0 45.5Z" fill="url(#fr)"/><path d="M4 16.6 H25 Q27 16.6 28 15.1 Q29 13.6 31 13.6 H52" fill="none" stroke="#fee48a" stroke-width="0.9" opacity="0.8"/></svg><div class="a lb" style="left:1081px;top:513.5px;width:128px;text-align:center;font-size:13px;color:#2a2f36;white-space:nowrap">erl</div>
<div class="cell" style="left:329px;top:548px;"></div><div class="cb" style="left:339px;top:558px;"></div><svg class="a" style="left:360px;top:595px" width="56" height="50" viewBox="0 0 56 50"><path d="M0 4 Q0 0 4 0 H20.5 Q22.5 0 24 2 L25.5 4 H52 Q56 4 56 8 V30 H0Z" fill="#e8b030"/><rect x="3" y="7" width="50" height="14" rx="2" fill="url(#pp)"/><path d="M0 20 Q0 16 4 16 H25 Q27 16 28 14.5 Q29 13 31 13 H52 Q56 13 56 17 V45.5 Q56 49.7 52 49.7 H4 Q0 49.7 0 45.5Z" fill="url(#fr)"/><path d="M4 16.6 H25 Q27 16.6 28 15.1 Q29 13.6 31 13.6 H52" fill="none" stroke="#fee48a" stroke-width="0.9" opacity="0.8"/></svg><div class="a lb" style="left:325px;top:671.5px;width:128px;text-align:center;font-size:13px;color:#2a2f36;white-space:nowrap">erv</div>
<div class="cell" style="left:455px;top:548px;background:#e4f4f0;border-radius:8px;"></div><div class="cb" style="left:465px;top:558px;background:transparent;"></div><svg class="a" style="left:486px;top:595px" width="56" height="50" viewBox="0 0 56 50"><path d="M0 4 Q0 0 4 0 H20.5 Q22.5 0 24 2 L25.5 4 H52 Q56 4 56 8 V30 H0Z" fill="#e8b030"/><rect x="3" y="7" width="50" height="14" rx="2" fill="url(#pp)"/><path d="M0 20 Q0 16 4 16 H25 Q27 16 28 14.5 Q29 13 31 13 H52 Q56 13 56 17 V45.5 Q56 49.7 52 49.7 H4 Q0 49.7 0 45.5Z" fill="url(#fr)"/><path d="M4 16.6 H25 Q27 16.6 28 15.1 Q29 13.6 31 13.6 H52" fill="none" stroke="#fee48a" stroke-width="0.9" opacity="0.8"/></svg><div class="a lb" style="left:451px;top:671.5px;width:128px;text-align:center;font-size:13px;color:#2a2f36;white-space:nowrap">exp</div>
<div class="cell" style="left:581px;top:548px;"></div><div class="cb" style="left:591px;top:558px;"></div><svg class="a" style="left:612px;top:595px" width="56" height="50" viewBox="0 0 56 50"><path d="M0 4 Q0 0 4 0 H20.5 Q22.5 0 24 2 L25.5 4 H52 Q56 4 56 8 V30 H0Z" fill="#e8b030"/><rect x="3" y="7" width="50" height="14" rx="2" fill="url(#pp)"/><path d="M0 20 Q0 16 4 16 H25 Q27 16 28 14.5 Q29 13 31 13 H52 Q56 13 56 17 V45.5 Q56 49.7 52 49.7 H4 Q0 49.7 0 45.5Z" fill="url(#fr)"/><path d="M4 16.6 H25 Q27 16.6 28 15.1 Q29 13.6 31 13.6 H52" fill="none" stroke="#fee48a" stroke-width="0.9" opacity="0.8"/></svg><div class="a lb" style="left:577px;top:671.5px;width:128px;text-align:center;font-size:13px;color:#2a2f36;white-space:nowrap">feg</div>
<div class="cell" style="left:707px;top:548px;"></div><div class="cb" style="left:717px;top:558px;"></div><svg class="a" style="left:738px;top:595px" width="56" height="50" viewBox="0 0 56 50"><path d="M0 4 Q0 0 4 0 H20.5 Q22.5 0 24 2 L25.5 4 H52 Q56 4 56 8 V30 H0Z" fill="#e8b030"/><rect x="3" y="7" width="50" height="14" rx="2" fill="url(#pp)"/><path d="M0 20 Q0 16 4 16 H25 Q27 16 28 14.5 Q29 13 31 13 H52 Q56 13 56 17 V45.5 Q56 49.7 52 49.7 H4 Q0 49.7 0 45.5Z" fill="url(#fr)"/><path d="M4 16.6 H25 Q27 16.6 28 15.1 Q29 13.6 31 13.6 H52" fill="none" stroke="#fee48a" stroke-width="0.9" opacity="0.8"/></svg><div class="a lb" style="left:703px;top:671.5px;width:128px;text-align:center;font-size:13px;color:#2a2f36;white-space:nowrap">ffd</div>
<div class="cell" style="left:833px;top:548px;"></div><div class="cb" style="left:843px;top:558px;"></div><svg class="a" style="left:864px;top:595px" width="56" height="50" viewBox="0 0 56 50"><path d="M0 4 Q0 0 4 0 H20.5 Q22.5 0 24 2 L25.5 4 H52 Q56 4 56 8 V30 H0Z" fill="#e8b030"/><rect x="3" y="7" width="50" height="14" rx="2" fill="url(#pp)"/><path d="M0 20 Q0 16 4 16 H25 Q27 16 28 14.5 Q29 13 31 13 H52 Q56 13 56 17 V45.5 Q56 49.7 52 49.7 H4 Q0 49.7 0 45.5Z" fill="url(#fr)"/><path d="M4 16.6 H25 Q27 16.6 28 15.1 Q29 13.6 31 13.6 H52" fill="none" stroke="#fee48a" stroke-width="0.9" opacity="0.8"/></svg><div class="a lb" style="left:829px;top:671.5px;width:128px;text-align:center;font-size:13px;color:#2a2f36;white-space:nowrap">fnt</div>
<div class="cell" style="left:959px;top:548px;"></div><div class="cb" style="left:969px;top:558px;"></div><svg class="a" style="left:990px;top:595px" width="56" height="50" viewBox="0 0 56 50"><path d="M0 4 Q0 0 4 0 H20.5 Q22.5 0 24 2 L25.5 4 H52 Q56 4 56 8 V30 H0Z" fill="#e8b030"/><rect x="3" y="7" width="50" height="14" rx="2" fill="url(#pp)"/><path d="M0 20 Q0 16 4 16 H25 Q27 16 28 14.5 Q29 13 31 13 H52 Q56 13 56 17 V45.5 Q56 49.7 52 49.7 H4 Q0 49.7 0 45.5Z" fill="url(#fr)"/><path d="M4 16.6 H25 Q27 16.6 28 15.1 Q29 13.6 31 13.6 H52" fill="none" stroke="#fee48a" stroke-width="0.9" opacity="0.8"/></svg><div class="a lb" style="left:955px;top:671.5px;width:128px;text-align:center;font-size:13px;color:#2a2f36;white-space:nowrap">font</div>
<div class="cell" style="left:1085px;top:548px;"></div><div class="cb" style="left:1095px;top:558px;"></div><svg class="a" style="left:1116px;top:595px" width="56" height="50" viewBox="0 0 56 50"><path d="M0 4 Q0 0 4 0 H20.5 Q22.5 0 24 2 L25.5 4 H52 Q56 4 56 8 V30 H0Z" fill="#e8b030"/><rect x="3" y="7" width="50" height="14" rx="2" fill="url(#pp)"/><path d="M0 20 Q0 16 4 16 H25 Q27 16 28 14.5 Q29 13 31 13 H52 Q56 13 56 17 V45.5 Q56 49.7 52 49.7 H4 Q0 49.7 0 45.5Z" fill="url(#fr)"/><path d="M4 16.6 H25 Q27 16.6 28 15.1 Q29 13.6 31 13.6 H52" fill="none" stroke="#fee48a" stroke-width="0.9" opacity="0.8"/></svg><div class="a lb" style="left:1081px;top:671.5px;width:128px;text-align:center;font-size:13px;color:#2a2f36;white-space:nowrap">frag</div>


<div class="a" style="left:1224px;top:313px;width:6px;height:50px;border-radius:3px;background:#9da1ac"></div>

<!-- footer -->
<div class="a" style="left:24px;top:695px;width:1222px;height:14px;background:linear-gradient(rgba(245,245,245,0),#f1f1f1)"></div>
<div class="a" style="left:24px;top:709px;width:1222px;height:1px;background:#e4e4e4"></div>
<div class="a" style="left:1022px;top:723px;width:199px;height:39px;border-radius:8px;background:radial-gradient(ellipse 50% 55% at 50% 100%,#25ee9f 0%,#22c991 40%,#1da88a 100%)"></div>
<div class="a" style="left:1022px;top:735px;width:199px;text-align:center;font-size:15.5px;color:#e2f8ef;-webkit-text-stroke:0.55px #e2f8ef;letter-spacing:0.35px">Recover All ...</div>


</body></html>
